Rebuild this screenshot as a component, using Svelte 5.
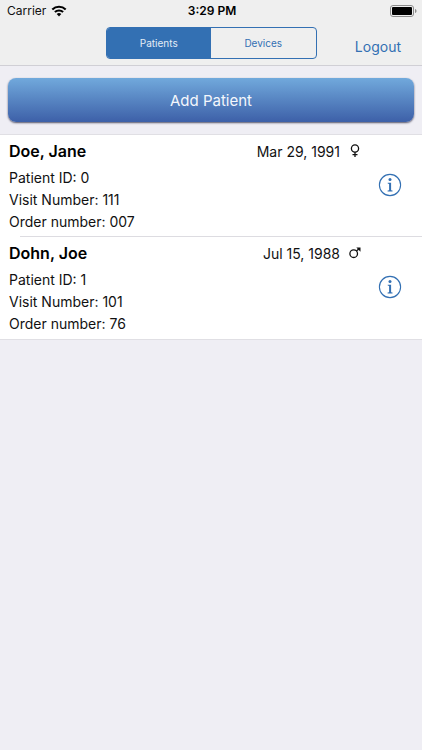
<script>
  const tabs = [
    { id: 'patients', label: 'Patients' },
    { id: 'devices', label: 'Devices' }
  ];

  const patients = [
    { id: 0, name: 'Doe, Jane', born: 'Mar 29, 1991', sex: 'female', visit: '111', order: '007' },
    { id: 1, name: 'Dohn, Joe', born: 'Jul 15, 1988', sex: 'male', visit: '101', order: '76' }
  ];

  let active = $state('patients');
</script>

<div class="screen">
  <header class="top">
    <div class="status">
      <div class="carrier">
        <span>Carrier</span>
        <svg width="16" height="12" viewBox="0 0 16 12" aria-hidden="true">
          <g fill="none" stroke="#000" stroke-width="2.1">
            <path d="M1.3 4.4a9.6 9.6 0 0 1 13.4 0" />
            <path d="M3.9 7.1a5.9 5.9 0 0 1 8.2 0" />
          </g>
          <path d="M8 11.4 5.7 9a3.3 3.3 0 0 1 4.6 0z" />
        </svg>
      </div>
      <span class="clock">3:29 PM</span>
      <svg class="battery" width="27" height="12" viewBox="0 0 27 12" role="img" aria-label="Battery full">
        <rect x="0.5" y="0.5" width="23" height="11" rx="2.5" fill="none" stroke="#8c8c8c" />
        <rect x="2" y="2" width="20" height="8" rx="1" />
        <path d="M25 4v4c2-.6 2-3.4 0-4z" fill="#8c8c8c" />
      </svg>
    </div>

    <nav class="bar">
      <div class="segments" role="tablist">
        {#each tabs as tab}
          <button
            type="button"
            class="segment"
            class:active={active === tab.id}
            role="tab"
            aria-selected={active === tab.id}
            onclick={() => (active = tab.id)}
          >
            {tab.label}
          </button>
        {/each}
      </div>
      <button type="button" class="logout">Logout</button>
    </nav>
  </header>

  <main>
    <div class="actions">
      <button type="button" class="add">Add Patient</button>
    </div>

    <ul class="patients">
      {#each patients as patient (patient.id)}
        <li class="patient">
          <div class="body">
            <div class="heading">
              <h2>{patient.name}</h2>
              <span class="born">{patient.born}</span>
              <svg class="sex" width="14" height="16" viewBox="0 0 14 16" role="img" aria-label={patient.sex}>
                {#if patient.sex === 'female'}
                  <g fill="none" stroke="#111" stroke-width="1.3">
                    <circle cx="7" cy="5.5" r="3.6" />
                    <path d="M7 9v5M4.5 11.7h5" />
                  </g>
                {:else}
                  <g fill="none" stroke="#111" stroke-width="1.3">
                    <circle cx="5.7" cy="8.7" r="3.8" />
                    <path d="M8.4 6l3-2.6" />
                  </g>
                  <path d="M8.3 2.5h4.2v4.2z" fill="#111" />
                {/if}
              </svg>
            </div>
            <p>Patient ID: {patient.id}</p>
            <p>Visit Number: {patient.visit}</p>
            <p>Order number: {patient.order}</p>
          </div>
          <button type="button" class="info" aria-label="Details for {patient.name}">
            <svg width="24" height="24" viewBox="0 0 24 24" aria-hidden="true">
              <circle cx="12" cy="12" r="10.6" fill="none" stroke="#3370b3" stroke-width="1.1" />
              <circle cx="12" cy="6.6" r="1.5" fill="#3370b3" />
              <path d="M9.7 9.7h3.4v7.5l1.4.4v.8H9.6v-.8l1.5-.4v-6.3l-1.4-.4z" fill="#3370b3" />
            </svg>
          </button>
        </li>
      {/each}
    </ul>
  </main>
</div>

<style>
  :global(body) {
    background: #efeef4;
  }

  .screen {
    font-family: Inter, Roboto, sans-serif;
    font-size: 14px;
    color: #111;
  }

  button {
    padding: 0;
    border: none;
    background: none;
    font: inherit;
    cursor: pointer;
  }

  .top {
    background: #efefef;
    border-bottom: 1px solid #d0cfd5;
  }

  .status {
    display: grid;
    grid-template-columns: 1fr auto 1fr;
    align-items: center;
    height: 21px;
    padding: 0 5px 0 7px;
    font-size: 12px;
  }

  .carrier {
    display: flex;
    align-items: center;
    gap: 5px;
  }

  .clock {
    font-weight: 600;
    color: #000;
  }

  .battery {
    justify-self: end;
  }

  .bar {
    display: grid;
    grid-template-columns: 1fr 2fr 1fr;
    align-items: center;
    height: 44px;
  }

  .segments {
    grid-column: 2;
    display: flex;
    height: 32px;
    box-sizing: border-box;
    border: 1px solid #3370b3;
    border-radius: 4px;
    overflow: hidden;
  }

  .segment {
    flex: 1;
    font-size: 10px;
    color: #3370b3;
  }

  .segment.active {
    background: #3370b3;
    color: #e4edf6;
  }

  .logout {
    justify-self: end;
    margin: 6px 21px 0 0;
    color: #3370b3;
  }

  .actions {
    padding: 12px 8px;
  }

  .add {
    display: block;
    width: 100%;
    height: 44px;
    border-radius: 8px;
    background: linear-gradient(#71a9dc, #3d60a8);
    box-shadow: 0 1px 2px #55556b;
    font-size: 15px;
    color: #f4f7fc;
  }

  .patients {
    margin: 0;
    padding: 0;
    list-style: none;
    background: #fff;
    border-top: 1px solid #e0dfe4;
    border-bottom: 1px solid #e0dfe4;
  }

  .patient {
    position: relative;
    display: flex;
    align-items: center;
    padding: 2px 20px 4px 9px;
  }

  .patient + .patient::before {
    content: '';
    position: absolute;
    top: -1px;
    left: 20px;
    right: 0;
    border-top: 1px solid #dddce1;
  }

  .body {
    flex: 1;
  }

  .heading {
    display: flex;
    align-items: center;
    height: 28px;
    margin-bottom: 2px;
    padding-right: 16px;
  }

  h2 {
    flex: 1;
    margin: 0;
    font-size: 16px;
    font-weight: 600;
    color: #000;
  }

  .sex {
    margin-left: 8px;
  }

  p {
    margin: 0;
    line-height: 22px;
  }

  .info {
    display: flex;
  }
</style>
